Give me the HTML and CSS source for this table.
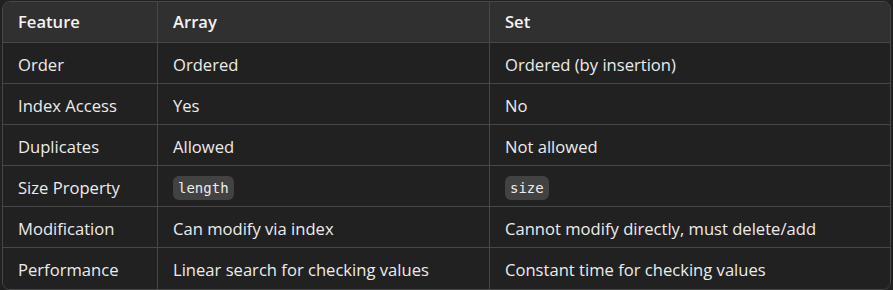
FILE: index.html
```html
<!DOCTYPE html>
<html>
<head>
<meta charset="utf-8">
<link rel="stylesheet" href="styles.css">
</head>
<body>
<div class="wrap">
<table class="cmp">
<thead>
<tr><th class="c1">Feature</th><th class="c2">Array</th><th class="c3">Set</th></tr>
</thead>
<tbody>
<tr><td>Order</td><td>Ordered</td><td>Ordered (by insertion)</td></tr>
<tr><td>Index Access</td><td>Yes</td><td>No</td></tr>
<tr><td>Duplicates</td><td>Allowed</td><td>Not allowed</td></tr>
<tr><td>Size Property</td><td><code>length</code></td><td><code>size</code></td></tr>
<tr><td>Modification</td><td>Can modify via index</td><td>Cannot modify directly, must delete/add</td></tr>
<tr><td>Performance</td><td>Linear search for checking values</td><td>Constant time for checking values</td></tr>
</tbody>
</table>
</div>
</body>
</html>
```
FILE: styles.css
```css
html, body {
  margin: 0;
  padding: 0;
  background: #212121;
}
.wrap {
  padding: 1px 2px 0 2px;
}
.cmp {
  width: 889px;
  border-collapse: separate;
  border-spacing: 0;
  border: 1px solid #474747;
  border-radius: 8px;
  overflow: hidden;
  font-family: "Open Sans", "Noto Sans", sans-serif;
  font-size: 16.6px;
  color: #ececec;
}
.cmp th, .cmp td {
  text-align: left;
  padding: 3px 15px 0 15px;
  height: 41px;
  border-right: 1px solid #474747;
  border-bottom: 1px solid #474747;
  box-sizing: border-box;
  line-height: 24px;
}
.cmp th:last-child, .cmp td:last-child { border-right: none; }
.cmp tbody tr:last-child td { border-bottom: none; }
.cmp th {
  padding-top: 0;
  background: #303030;
  font-weight: 600;
  color: #f3f3f3;
}
.cmp td { background: #212121; }
.c1 { width: 155px; }
.c2 { width: 332px; }
code {
  font-family: "DejaVu Sans Mono", monospace;
  font-size: 14px;
  background: #424242;
  border-radius: 6px;
  padding: 4px 5px;
  color: #ececec;
}
```
